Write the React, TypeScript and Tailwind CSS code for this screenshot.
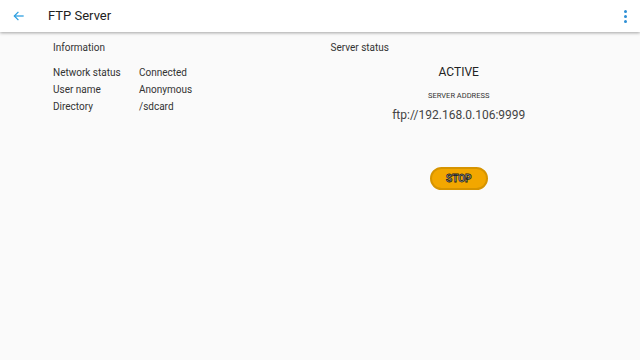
import React from "react";

export default function App() {
  return (
    <div
      className="w-[640px] h-[360px] bg-[#fafafa] flex flex-col overflow-hidden"
      style={{ fontFamily: "Roboto, 'Liberation Sans', sans-serif" }}
    >
      <div className="h-[32px] bg-white flex items-center shadow-[0_1px_3px_rgba(0,0,0,0.35)] relative z-10 shrink-0">
        <div className="w-[37px] flex justify-center pl-[1px]">
          <svg width="14" height="14" viewBox="0 0 24 24" fill="none" stroke="#2d9fe0" strokeWidth="2.2">
            <path d="M20 12H4" />
            <path d="M11 5l-7 7 7 7" />
          </svg>
        </div>
        <div className="ml-[11px] text-[13px] text-[#212121]">FTP Server</div>
        <div className="ml-auto mr-[13px] flex flex-col gap-[2px]">
          <span className="w-[3px] h-[3px] rounded-full bg-[#2d8fd5]" />
          <span className="w-[3px] h-[3px] rounded-full bg-[#2d8fd5]" />
          <span className="w-[3px] h-[3px] rounded-full bg-[#2d8fd5]" />
        </div>
      </div>
      <div className="grid grid-cols-2 gap-[19px] px-[53px] pt-[10px]">
        <div className="flex flex-col text-[10px] text-[#333]">
          <div className="h-[12px] leading-[12px]">Information</div>
          <div className="mt-[13px] flex flex-col gap-[5px]">
            {[
              ["Network status", "Connected"],
              ["User name", "Anonymous"],
              ["Directory", "/sdcard"],
            ].map(([k, v]) => (
              <div key={k} className="flex h-[12px] leading-[12px]">
                <div className="w-[86px]">{k}</div>
                <div>{v}</div>
              </div>
            ))}
          </div>
        </div>
        <div className="flex flex-col text-[#333] pl-[1px]">
          <div className="text-[10px] h-[12px] leading-[12px]">Server status</div>
          <div className="flex flex-col items-center">
            <div className="mt-[11px] text-[12px] leading-[14px] text-[#222]">ACTIVE</div>
            <div className="mt-[13px] text-[7.5px] leading-[8px] text-[#333]">SERVER ADDRESS</div>
            <div className="mt-[8px] text-[12px] leading-[14px] text-[#444]">ftp://192.168.0.106:9999</div>
            <button className="mt-[45px] w-[58px] h-[23px] rounded-full bg-[#f2a700] border-[2px] border-[#d69400] text-[10px] leading-[10px] font-bold text-[#c8c8c8] [-webkit-text-stroke:0.8px_#1a1a1a] flex items-center justify-center">
              STOP
            </button>
          </div>
        </div>
      </div>
    </div>
  );
}
